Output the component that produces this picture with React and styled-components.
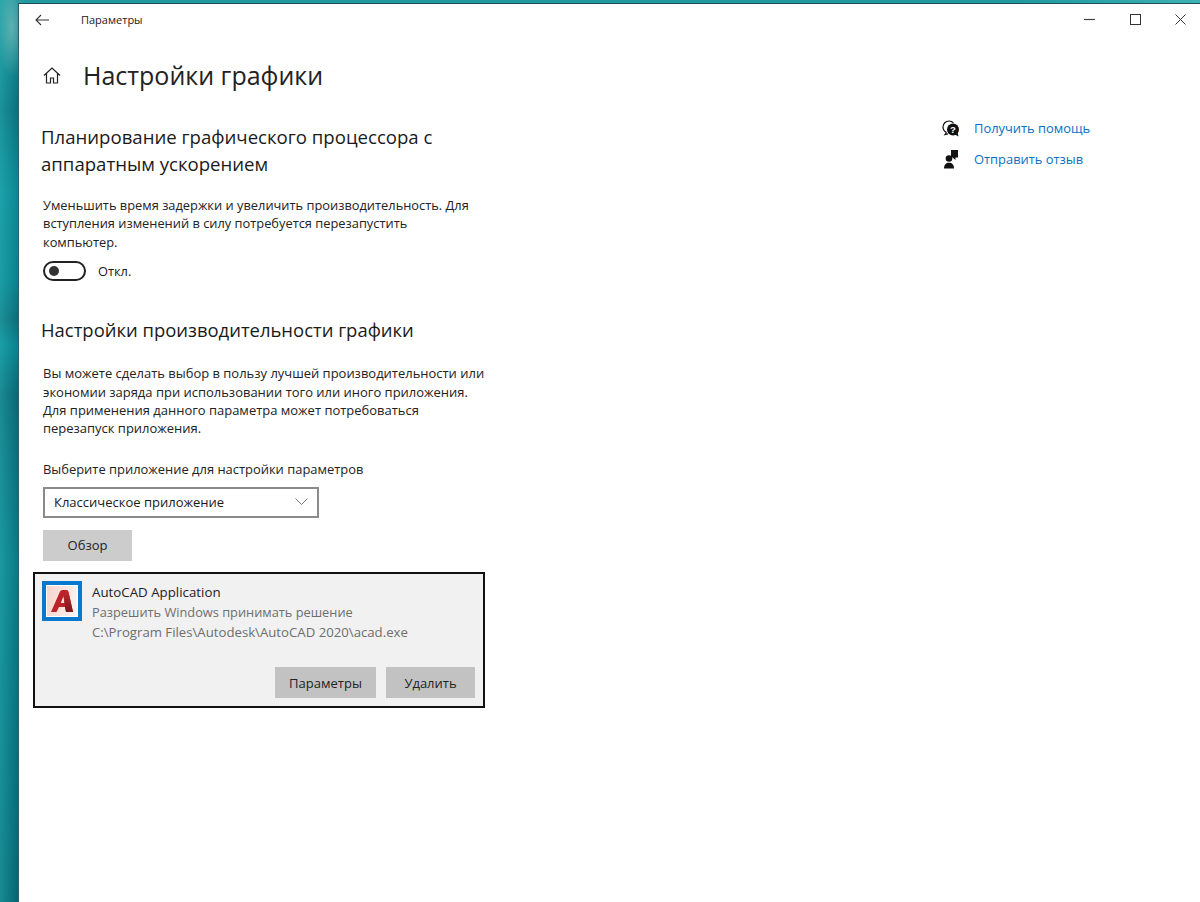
import React from "react";
import styled, { createGlobalStyle } from "styled-components";

const GlobalStyle = createGlobalStyle`
  html, body {
    margin: 0;
    padding: 0;
    height: 902px;
    overflow: hidden;
    font-family: "Open Sans", "Noto Sans", sans-serif;
    color: #1a1a1a;
  }
`;

const Desktop = styled.div`
  width: 1200px;
  height: 902px;
  box-sizing: border-box;
  padding: 3px 0 0 18px;
  background:
    radial-gradient(ellipse 14px 50px at 12px 28px, rgba(190, 225, 220, 0.4), transparent),
    linear-gradient(90deg, rgba(60, 190, 190, 0.35) 0, rgba(0, 0, 0, 0.08) 18px, transparent 20px, transparent 85%, rgba(90, 200, 200, 0.5) 100%),
    linear-gradient(
      180deg,
      #1f9aa0 0,
      #0f8791 70px,
      #0a7a86 110px,
      #0d93a0 190px,
      #0a8c99 280px,
      #0c7682 320px,
      #0a8e9a 345px,
      #0a6f7c 395px,
      #0a8491 560px,
      #067885 760px,
      #066e7b 902px
    );
`;

const Window = styled.div`
  height: 100%;
  box-sizing: border-box;
  background: #fff;
  border-left: 1px solid #2f5f68;
  border-top: 1px solid #1f4f5a;
  display: flex;
  flex-direction: column;
`;

const TitleBar = styled.div`
  height: 31px;
  display: flex;
  align-items: center;
  padding-left: 16px;
  flex-shrink: 0;
`;

const TitleText = styled.span`
  font-size: 11px;
  margin-left: 32px;
`;

const WindowControls = styled.div`
  margin-left: auto;
  display: flex;
  padding-right: 14px;
  gap: 34.5px;
  align-items: center;
`;

const Page = styled.div`
  display: flex;
  flex: 1;
`;

const Main = styled.div`
  width: 470px;
  padding: 11px 0 0 24px;
  display: flex;
  flex-direction: column;
  align-items: flex-start;
`;

const PageHeader = styled.div`
  display: flex;
  align-items: center;
  gap: 22px;
  height: 58px;
`;

const PageTitle = styled.h1`
  margin: 0;
  font-size: 25px;
  font-weight: 400;
  color: #222;
`;

const Heading = styled.h2`
  margin: ${(p) => p.$top || 0}px 0 0 -2px;
  font-size: ${(p) => p.$size}px;
  line-height: 27px;
  font-weight: 400;
  color: #1a1a1a;
`;

const Body = styled.p`
  margin: ${(p) => p.$top || 0}px 0 0;
  font-size: ${(p) => p.$size}px;
  line-height: 18.4px;
  color: #222;
  white-space: nowrap;
`;

const ToggleRow = styled.div`
  display: flex;
  align-items: center;
  gap: 12px;
  margin-top: 10px;
  font-size: 12.8px;
`;

const Toggle = styled.span`
  width: 43px;
  height: 20px;
  box-sizing: border-box;
  border: 2px solid #222;
  border-radius: 10px;
  display: flex;
  align-items: center;
  padding-left: 4px;

  &::before {
    content: "";
    width: 10px;
    height: 10px;
    border-radius: 50%;
    background: #333;
  }
`;

const Select = styled.div`
  width: 276px;
  height: 31px;
  box-sizing: border-box;
  margin-top: 9px;
  border: 2px solid #8a8a8a;
  display: flex;
  align-items: center;
  justify-content: space-between;
  padding: 0 9px 2px 9px;
  font-size: 13px;
`;

const Button = styled.button`
  height: 31px;
  width: ${(p) => p.$width}px;
  border: none;
  padding: 0;
  background: ${(p) => p.$bg || "#cccccc"};
  font: inherit;
  font-size: 13px;
  color: #222;
`;

const BrowseButton = styled(Button)`
  margin-top: 12px;
  padding-bottom: 2px;
`;

const AppCard = styled.div`
  width: 452px;
  height: 136px;
  box-sizing: border-box;
  margin: 11px 0 0 -10px;
  border: 2px solid #111;
  background: #f1f1f1;
  padding: 7px 8px 8px 7px;
  display: flex;
  flex-direction: column;
`;

const AppInfo = styled.div`
  display: flex;
  gap: 10px;
`;

const AppIcon = styled.div`
  width: 40px;
  height: 40px;
  box-sizing: border-box;
  border: 4px solid #0b78d0;
  background: linear-gradient(100deg, #f7d3c9 0%, #f8e6e0 55%, #fbf6f4 100%);
  box-shadow: inset 0 0 0 1px #fff;
  display: flex;
  align-items: center;
  justify-content: center;
`;

const AppText = styled.div`
  margin-top: 1px;
`;

const AppName = styled.div`
  font-size: 13.3px;
  line-height: 20px;
  color: #222;
`;

const AppMeta = styled.div`
  font-size: ${(p) => p.$size}px;
  line-height: 20px;
  color: #6e6e6e;
`;

const CardActions = styled.div`
  margin-top: auto;
  display: flex;
  justify-content: flex-end;
  gap: 10px;
`;

const Aside = styled.div`
  margin-left: 429px;
  padding-top: 84px;
  display: flex;
  flex-direction: column;
  gap: 13px;
`;

const HelpLink = styled.a`
  display: flex;
  align-items: center;
  gap: 14px;
  height: 18px;
  font-size: 12.9px;
  color: #0a6fc4;
`;

const HelpIcon = () => (
  <svg width="18" height="17" viewBox="0 0 18 17">
    <path d="M4.500 12.500C2.500 11.500 1 9.500 1 7c0-3.300 2.700-6 6-6 1.800 0 3.300.7 4.400 1.900M4.500 12.500L3 14.500l3-.6" fill="none" stroke="#111" strokeWidth="1.200" />
    <circle cx="11" cy="9.500" r="6" fill="#111" />
    <path d="M13 14.500l3.500 2-1-4.500z" fill="#111" />
    <text x="11" y="13" fontSize="9.500" fontWeight="700" textAnchor="middle" fill="#fff" fontFamily="Liberation Sans, sans-serif">?</text>
  </svg>
);

const FeedbackIcon = () => (
  <svg width="18" height="19" viewBox="0 0 18 19">
    <path d="M9 0h7v7.500h-2.500V10L10.500 7.500H9z" fill="#111" />
    <circle cx="7" cy="8.500" r="3.300" fill="#111" />
    <path d="M2 18.500c0-3.800 2-5.800 5-5.800s5 2 5 5.800z" fill="#111" />
  </svg>
);

const AutocadGlyph = () => (
  <svg width="24" height="24" viewBox="0 0 24 24">
    <defs>
      <linearGradient id="acadRight" x1="0" y1="0" x2="0" y2="1">
        <stop offset="0" stopColor="#c42a30" />
        <stop offset="1" stopColor="#7c161c" />
      </linearGradient>
    </defs>
    <path
      d="M1 23L10 2.500Q10.700 1 12.500 1H16.500Q18 1 18.500 3L23 23H16L15 18H9L6.500 23ZM10.800 14H14.500L13.500 7Z"
      fill="#bd2229"
      fillRule="evenodd"
    />
    <path d="M16.500 1Q18 1 18.500 3L23 23H16L15 18 14.500 14 13.500 7Z" fill="url(#acadRight)" />
  </svg>
);

export default function App() {
  return (
    <>
      <GlobalStyle />
      <Desktop>
        <Window>
          <TitleBar>
            <svg width="14" height="12" viewBox="0 0 14 12">
              <path d="M6 1L1 6l5 5M1 6h13" fill="none" stroke="#333" strokeWidth="1.100" />
            </svg>
            <TitleText>Параметры</TitleText>
            <WindowControls>
              <svg width="11" height="11" viewBox="0 0 11 11">
                <path d="M0 5.500h11" stroke="#444" strokeWidth="1.200" />
              </svg>
              <svg width="11" height="11" viewBox="0 0 11 11">
                <rect x="0.500" y="0.500" width="10" height="10" fill="none" stroke="#333" strokeWidth="1" />
              </svg>
              <svg width="11" height="11" viewBox="0 0 11 11">
                <path d="M0.500 0.500l10 10M10.500 0.500l-10 10" stroke="#333" strokeWidth="1" />
              </svg>
            </WindowControls>
          </TitleBar>
          <Page>
            <Main>
              <PageHeader>
                <svg width="18" height="17" viewBox="0 0 18 17">
                  <path d="M1 8.500L9 1l8 7.500M3.500 6.500V16h4v-5h3v5h4V6.500" fill="none" stroke="#222" strokeWidth="1.200" />
                </svg>
                <PageTitle>Настройки графики</PageTitle>
              </PageHeader>
              <Heading $top={19} $size={18.6}>
                Планирование графического процессора с<br />аппаратным ускорением
              </Heading>
              <Body $top={19} $size={12.85}>
                Уменьшить время задержки и увеличить производительность. Для
                <br />вступления изменений в силу потребуется перезапустить
                <br />компьютер.
              </Body>
              <ToggleRow>
                <Toggle />
                Откл.
              </ToggleRow>
              <Heading $top={35} $size={18.45}>Настройки производительности графики</Heading>
              <Body $top={21} $size={12.97}>
                Вы можете сделать выбор в пользу лучшей производительности или
                <br />экономии заряда при использовании того или иного приложения.
                <br />Для применения данного параметра может потребоваться
                <br />перезапуск приложения.
              </Body>
              <Body $top={22} $size={12.93}>Выберите приложение для настройки параметров</Body>
              <Select>
                Классическое приложение
                <svg width="13" height="7" viewBox="0 0 13 7">
                  <path d="M0.500 0.500l6 6 6-6" fill="none" stroke="#777" strokeWidth="1" />
                </svg>
              </Select>
              <BrowseButton $width={89}>Обзор</BrowseButton>
              <AppCard>
                <AppInfo>
                  <AppIcon>
                    <AutocadGlyph />
                  </AppIcon>
                  <AppText>
                    <AppName>AutoCAD Application</AppName>
                    <AppMeta $size={12.8}>Разрешить Windows принимать решение</AppMeta>
                    <AppMeta $size={13.2}>C:\Program Files\Autodesk\AutoCAD 2020\acad.exe</AppMeta>
                  </AppText>
                </AppInfo>
                <CardActions>
                  <Button $width={101} $bg="#c2c2c2">Параметры</Button>
                  <Button $width={89} $bg="#c2c2c2">Удалить</Button>
                </CardActions>
              </AppCard>
            </Main>
            <Aside>
              <HelpLink>
                <HelpIcon />
                Получить помощь
              </HelpLink>
              <HelpLink>
                <FeedbackIcon />
                Отправить отзыв
              </HelpLink>
            </Aside>
          </Page>
        </Window>
      </Desktop>
    </>
  );
}
